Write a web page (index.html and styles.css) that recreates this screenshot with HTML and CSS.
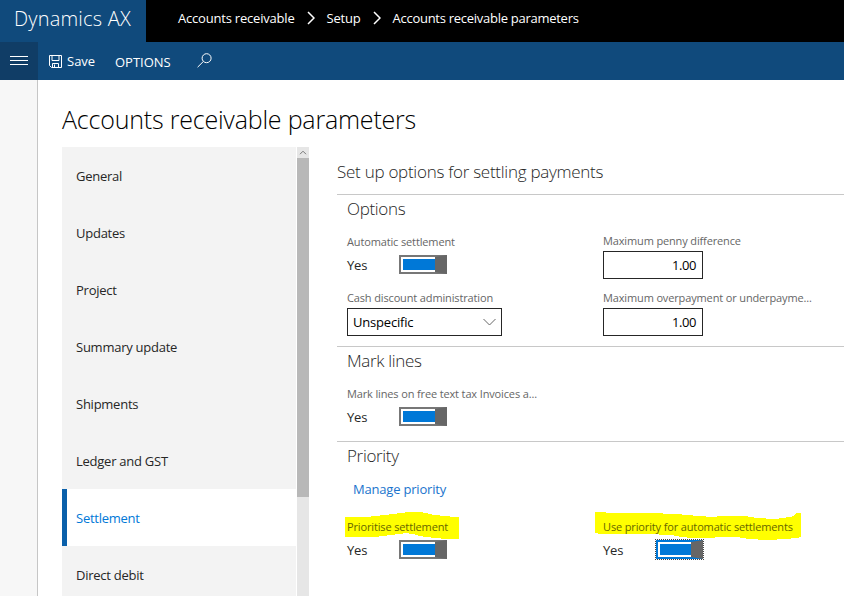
FILE: index.html
```html
<!DOCTYPE html>
<html lang="en">
<head>
  <meta charset="UTF-8" />
  <meta name="viewport" content="width=device-width, initial-scale=1.0" />
  <title>Accounts receivable parameters</title>
  <link rel="stylesheet" href="styles.css">
</head>
<body>
  <header class="top-bar">
    <div class="brand">Dynamics AX</div>
    <nav class="breadcrumb">
      <span>Accounts receivable</span>
      <svg class="crumb-arrow" width="8" height="14" viewBox="0 0 8 14"><path d="M1 1l6 6-6 6" /></svg>
      <span>Setup</span>
      <svg class="crumb-arrow" width="8" height="14" viewBox="0 0 8 14"><path d="M1 1l6 6-6 6" /></svg>
      <span class="current">Accounts receivable parameters</span>
    </nav>
  </header>

  <div class="action-bar">
    <button class="menu-button" aria-label="Menu">
      <svg width="18" height="10" viewBox="0 0 18 10"><path d="M0 .5h18M0 4.5h18M0 8.5h18" /></svg>
    </button>
    <button class="action save">
      <svg width="13" height="13" viewBox="0 0 13 13">
        <path d="M.5 .5h12v12h-10l-2-2zM3 .5v5h7v-5M3.5 12.5v-4h6v4M5.5 9.5v3" />
      </svg>
      <span>Save</span>
    </button>
    <button class="action options">OPTIONS</button>
    <button class="action search" aria-label="Search">
      <svg width="15" height="15" viewBox="0 0 15 15"><circle cx="9.6" cy="5.2" r="4.5" /><path d="M6.3 8.5L.6 14.2" /></svg>
    </button>
  </div>

  <div class="workspace">
    <aside class="rail"></aside>
    <main class="page">
      <h1>Accounts receivable parameters</h1>
      <div class="columns">
        <ul class="tabs">
          <li>General</li>
          <li>Updates</li>
          <li>Project</li>
          <li>Summary update</li>
          <li>Shipments</li>
          <li>Ledger and GST</li>
          <li class="active">Settlement</li>
          <li>Direct debit</li>
        </ul>
        <div class="scrollbar">
          <div class="scroll-up">
            <svg width="8" height="5" viewBox="0 0 8 5"><path d="M1 4.2l3-3 3 3" /></svg>
          </div>
          <div class="scroll-thumb"></div>
        </div>

        <div class="form">
          <h2>Set up options for settling payments</h2>

          <section>
            <h3>Options</h3>
            <div class="fields">
              <div class="field toggle-field">
                <label>Automatic settlement</label>
                <div class="toggle-row"><span>Yes</span><div class="toggle"></div></div>
              </div>
              <div class="field">
                <label>Maximum penny difference</label>
                <div class="box number">1.00</div>
              </div>
              <div class="field">
                <label>Cash discount administration</label>
                <div class="box select">
                  <span>Unspecific</span>
                  <svg width="13" height="8" viewBox="0 0 13 8"><path d="M.5 1l6 6 6-6" /></svg>
                </div>
              </div>
              <div class="field">
                <label>Maximum overpayment or underpayme...</label>
                <div class="box number">1.00</div>
              </div>
            </div>
          </section>

          <section>
            <h3>Mark lines</h3>
            <div class="fields">
              <div class="field toggle-field">
                <label>Mark lines on free text tax Invoices a...</label>
                <div class="toggle-row"><span>Yes</span><div class="toggle"></div></div>
              </div>
            </div>
          </section>

          <section class="priority">
            <h3>Priority</h3>
            <a class="manage" href="#">Manage priority</a>
            <div class="fields">
              <div class="field toggle-field marked">
                <svg class="marker marker-left" width="114" height="27" viewBox="0 0 114 27">
                  <path d="M0 5h26V4h9V3h9V2h8V1h8V0h18v1h5v1h4v1h8v1h10v1h9v1h2V5h7v22H96v-1H86v-1h-8v-1h-5v-1h-3v-1h-6v-1h-6v1h-8v1h-8v1h-8v1H0z" />
                </svg>
                <label>Prioritise settlement</label>
                <div class="toggle-row"><span>Yes</span><div class="toggle"></div></div>
              </div>
              <div class="field toggle-field marked">
                <svg class="marker marker-right" width="206" height="28" viewBox="0 0 206 28">
                  <path d="M0 0h11v1h57v1h19v1h11v1h13v1h11V4h31v1h6v1h12v1h13V6h7V5h6V4h2V3h1V2h1V1h9v22h-1v1h-2v1h-3v1h-8v1h-14v1h-19v-1h-12v-1h-6v-1h-25v1h-28v-1h-8v-1H79v-1H64v-1H3v-1H0z" />
                </svg>
                <label>Use priority for automatic settlements</label>
                <div class="toggle-row"><span>Yes</span><div class="toggle focused"></div></div>
              </div>
            </div>
          </section>
        </div>
      </div>
    </main>
  </div>
</body>
</html>
```
FILE: styles.css
```css
:root {
  --bar: #104a7c;
  --bar-dark: #103d66;
  --accent: #0078d7;
  --text: #262626;
  --muted: #666;
  --line: #c8c8c8;
}

* {
  box-sizing: border-box;
}

body {
  margin: 0;
  height: 596px;
  overflow: hidden;
  background: #fff;
  color: var(--text);
  font-family: "Open Sans", "Noto Sans", sans-serif;
  font-size: 13px;
  letter-spacing: -0.2px;
  white-space: nowrap;
}

svg {
  display: block;
  flex: none;
  fill: none;
  stroke: currentColor;
}

button {
  border: 0;
  padding: 0;
  background: none;
  color: #fff;
  font: inherit;
}

h1, h2, h3, ul {
  margin: 0;
  padding: 0;
  font-weight: 400;
}

.top-bar {
  display: flex;
  height: 42px;
  background: #000;
  color: #fff;
}

.brand {
  width: 146px;
  padding-left: 14px;
  background: var(--bar);
  font-size: 20px;
  font-weight: 300;
  letter-spacing: 0.2px;
  line-height: 37px;
}

.breadcrumb {
  display: flex;
  align-items: center;
  height: 36px;
  padding-left: 32px;
}

.breadcrumb .current {
  letter-spacing: -0.27px;
}

.crumb-arrow {
  margin: 0 12px;
  stroke-width: 1.5;
}

.action-bar {
  display: flex;
  height: 38px;
  background: var(--bar);
}

.menu-button {
  display: flex;
  justify-content: center;
  align-items: center;
  width: 38px;
  background: var(--bar-dark);
}

.action {
  display: flex;
  align-items: center;
  letter-spacing: 0;
}

.save {
  width: 66px;
  margin-left: 11px;
  gap: 5px;
}

.options {
  width: 82px;
  padding-top: 2px;
}

.search {
  padding-bottom: 1px;
}

.workspace {
  display: flex;
  height: 516px;
}

.rail {
  width: 38px;
  background: #f7f7f7;
  border-right: 1px solid #c6c6c6;
}

.page {
  flex: 1;
  padding-left: 24px;
}

h1 {
  height: 67px;
  color: #000;
  font-size: 25px;
  font-weight: 300;
  line-height: 79px;
}

.columns {
  display: flex;
  height: 449px;
}

.tabs {
  width: 234px;
  background: #f3f3f3;
  list-style: none;
  overflow: hidden;
}

.tabs li {
  height: 57px;
  padding-left: 14px;
  letter-spacing: -0.25px;
  line-height: 58px;
}

.tabs .active {
  padding-left: 9px;
  border-left: 5px solid #0a60aa;
  background: #fff;
  color: var(--accent);
}

.scrollbar {
  width: 12px;
  margin-left: 1px;
  background: #e6e6e6;
}

.scroll-up {
  display: flex;
  justify-content: center;
  align-items: center;
  height: 11px;
  color: #777;
}

.scroll-thumb {
  height: 339px;
  background: #b8b8b8;
}

.form {
  flex: 1;
  margin-left: 28px;
}

h2 {
  height: 47px;
  font-size: 17px;
  font-weight: 300;
  letter-spacing: -0.27px;
  line-height: 50px;
}

section {
  height: 152px;
  padding-left: 10px;
  border-top: 1px solid var(--line);
}

section + section {
  height: 95px;
}

section.priority {
  height: auto;
}

h3 {
  height: 38px;
  font-size: 17px;
  font-weight: 300;
  letter-spacing: -0.33px;
  line-height: 27px;
}

.fields {
  display: grid;
  grid-template-columns: 256px 1fr;
  row-gap: 11px;
}

.field {
  position: relative;
  height: 46px;
}

.field label {
  display: block;
  height: 18px;
  color: var(--muted);
  font-size: 11px;
  letter-spacing: -0.14px;
  line-height: 16px;
}

.toggle-field label {
  position: relative;
  padding-top: 1px;
}

.toggle-row {
  display: flex;
  height: 28px;
  line-height: 29px;
}

.toggle-row span {
  width: 52px;
}

.toggle {
  width: 48px;
  height: 19px;
  margin-top: 4px;
  border: 2px solid #777;
  border-right: 12px solid #666;
  background: var(--accent);
  box-shadow: inset 2px 0 #fff, inset 0 2px #fff, inset 0 -2px #fff;
}

.toggle.focused {
  width: 47px;
  margin-left: 1px;
  border-color: var(--accent);
  border-right-color: #666;
  outline: 1px dotted #444;
}

.box {
  height: 28px;
  border: 1px solid #262626;
  color: #000;
  line-height: 27px;
}

.number {
  width: 100px;
  padding-right: 6px;
  letter-spacing: -0.4px;
  text-align: right;
}

.select {
  display: flex;
  justify-content: space-between;
  align-items: center;
  width: 155px;
  padding: 0 5px;
}

.select svg {
  color: #666;
}

.manage {
  display: block;
  height: 38px;
  padding-left: 6px;
  color: #1a74cd;
  line-height: 18px;
  text-decoration: none;
}

/* highlighter strokes behind the priority labels */
.marker {
  position: absolute;
  fill: #ff0;
  stroke: none;
}

.marker-left {
  left: -2px;
  top: -6px;
}

.marker-right {
  left: -8px;
  top: -6px;
}

.marked label {
  color: #660;
}
```
